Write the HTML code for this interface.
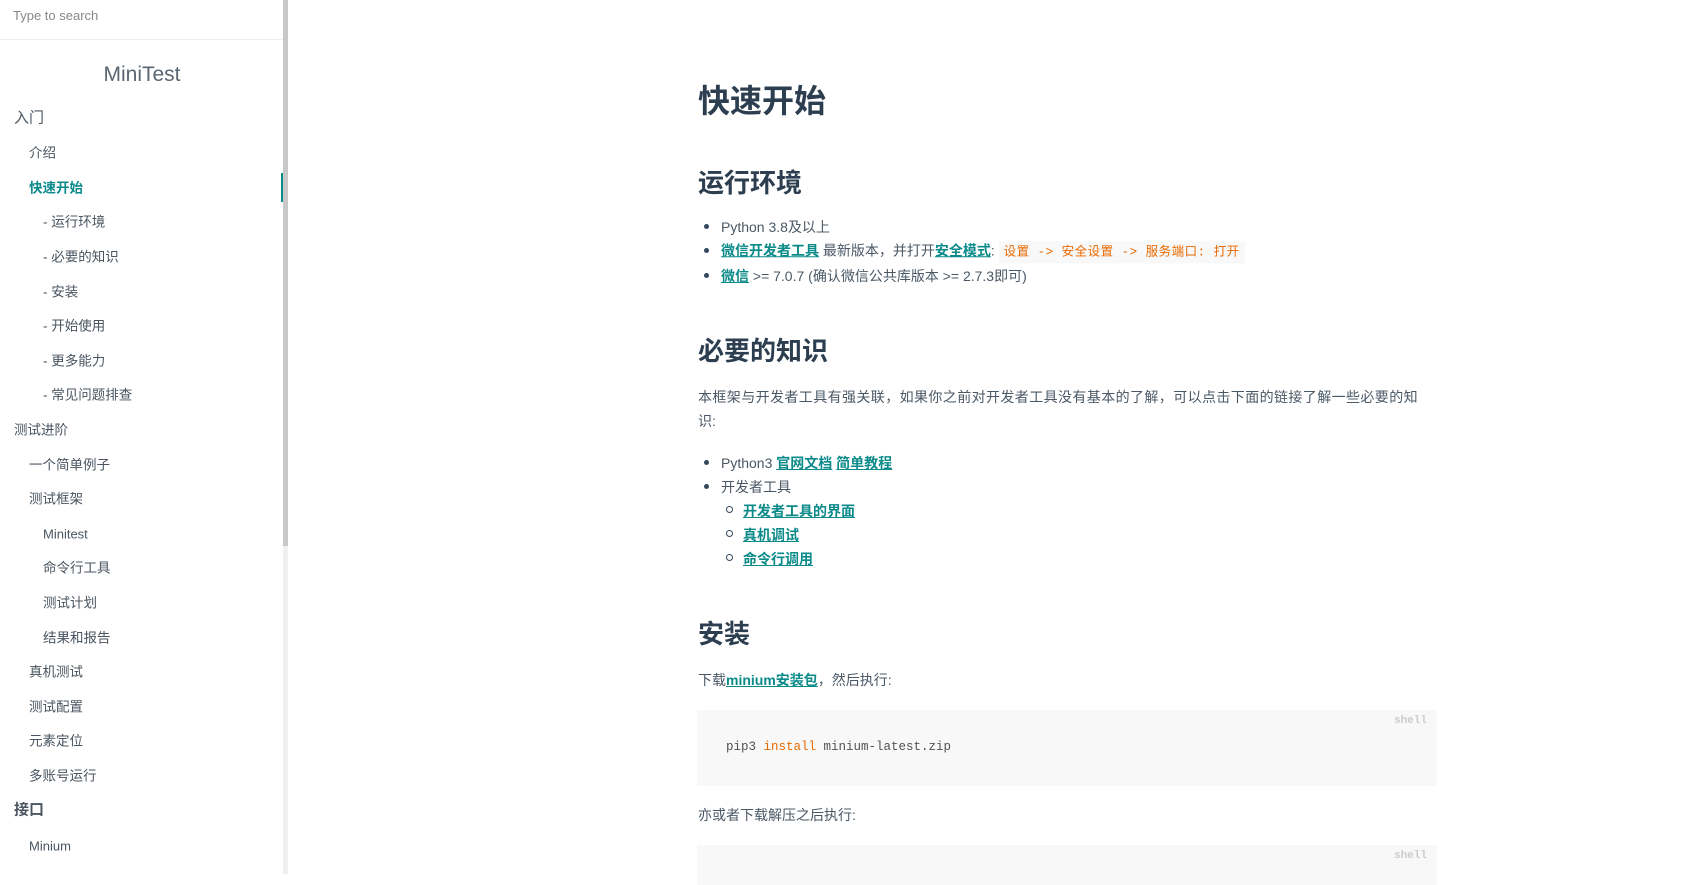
<!DOCTYPE html>
<html><head><meta charset="utf-8"><style>
*{margin:0;padding:0;box-sizing:border-box}
body{width:1696px;height:874px;overflow:hidden;background:#fff;font-family:"Liberation Sans","Noto Sans CJK SC",sans-serif;color:#34495e;position:relative}
.a{position:absolute;white-space:nowrap;line-height:1}
.sb{position:absolute;left:0;top:0;width:284px;height:874px;background:#fff}
.si{font-size:13.5px;color:#4a5560;transform:translateY(-50%)}
h1,h2{position:absolute;left:698px;font-weight:700;color:#2c3e50;line-height:1;transform:translateY(-50%);white-space:nowrap}
h1{font-size:32px}h2{font-size:26px}
.t{font-size:14px;color:#4a5866;transform:translateY(-50%)}
a{color:#0b8a8a;font-weight:700;text-decoration:underline}
.dot{position:absolute;width:5px;height:5px;border-radius:50%;background:#34495e}
.circ{position:absolute;width:7px;height:7px;border-radius:50%;border:1.3px solid #34495e}
.code{position:absolute;left:697px;width:740px;background:#f8f8f8}
.mono{font-family:"Liberation Mono",monospace}
</style></head><body>
<div class="sb">
<div class="a" style="left:13px;top:9px;font-size:13px;color:#888">Type to search</div>
<div style="position:absolute;left:0;top:39px;width:284px;height:1px;background:#eee"></div>
<div class="a" style="left:0;width:284px;text-align:center;top:64px;font-size:21px;color:#5a6672">MiniTest</div>
</div>
<div style="position:absolute;left:283px;top:0;width:5px;height:546px;background:#c8c8c8"></div>
<div style="position:absolute;left:283px;top:546px;width:5px;height:328px;background:#f0f0f0"></div>
<div style="position:absolute;left:281px;top:173px;width:2px;height:29px;background:#0b8a8a"></div>
<div class="a si" style="left:14px;top:118px;font-size:15px">入门</div>
<div class="a si" style="left:29px;top:153px">介绍</div>
<div class="a si" style="left:29px;top:188px;color:#0b8a8a;font-weight:700">快速开始</div>
<div class="a si" style="left:43px;top:222px">- 运行环境</div>
<div class="a si" style="left:43px;top:257px">- 必要的知识</div>
<div class="a si" style="left:43px;top:292px">- 安装</div>
<div class="a si" style="left:43px;top:326px">- 开始使用</div>
<div class="a si" style="left:43px;top:361px">- 更多能力</div>
<div class="a si" style="left:43px;top:395px">- 常见问题排查</div>
<div class="a si" style="left:14px;top:430px">测试进阶</div>
<div class="a si" style="left:29px;top:465px">一个简单例子</div>
<div class="a si" style="left:29px;top:499px">测试框架</div>
<div class="a si" style="left:43px;top:534px;font-size:13px">Minitest</div>
<div class="a si" style="left:43px;top:568px">命令行工具</div>
<div class="a si" style="left:43px;top:603px">测试计划</div>
<div class="a si" style="left:43px;top:638px">结果和报告</div>
<div class="a si" style="left:29px;top:672px">真机测试</div>
<div class="a si" style="left:29px;top:707px">测试配置</div>
<div class="a si" style="left:29px;top:741px">元素定位</div>
<div class="a si" style="left:29px;top:776px">多账号运行</div>
<div class="a si" style="left:14px;top:810px;font-size:15px;font-weight:700">接口</div>
<div class="a si" style="left:29px;top:846px;font-size:13px">Minium</div>

<h1 style="top:101px">快速开始</h1>
<h2 style="top:183px">运行环境</h2>
<div class="dot" style="left:704px;top:224px"></div>
<div class="a t" style="left:721px;top:227px">Python 3.8及以上</div>
<div class="dot" style="left:704px;top:248px"></div>
<div class="a t" style="left:721px;top:251px"><a>微信开发者工具</a> 最新版本，并打开<a>安全模式</a>: <span class="mono" style="background:#f8f8f8;color:#e96900;font-size:12.5px;padding:4px 5px;letter-spacing:0.5px">设置 -&gt; 安全设置 -&gt; 服务端口: 打开</span></div>
<div class="dot" style="left:704px;top:273px"></div>
<div class="a t" style="left:721px;top:276px"><a>微信</a> &gt;= 7.0.7 (确认微信公共库版本 &gt;= 2.7.3即可)</div>
<h2 style="top:351px">必要的知识</h2>
<div class="a t" style="left:698px;top:397px;letter-spacing:0.4px">本框架与开发者工具有强关联，如果你之前对开发者工具没有基本的了解，可以点击下面的链接了解一些必要的知</div>
<div class="a t" style="left:698px;top:421px">识:</div>
<div class="dot" style="left:704px;top:460px"></div>
<div class="a t" style="left:721px;top:463px">Python3 <a>官网文档</a> <a>简单教程</a></div>
<div class="dot" style="left:704px;top:484px"></div>
<div class="a t" style="left:721px;top:487px">开发者工具</div>
<div class="circ" style="left:726px;top:506px"></div>
<div class="a t" style="left:743px;top:511px"><a>开发者工具的界面</a></div>
<div class="circ" style="left:726px;top:530px"></div>
<div class="a t" style="left:743px;top:535px"><a>真机调试</a></div>
<div class="circ" style="left:726px;top:554px"></div>
<div class="a t" style="left:743px;top:559px"><a>命令行调用</a></div>
<h2 style="top:634px">安装</h2>
<div class="a t" style="left:698px;top:680px">下载<a>minium安装包</a>，然后执行:</div>
<div class="code" style="top:710px;height:76px">
<div class="a mono" style="right:10px;top:6px;font-size:11px;color:#ccc;font-weight:700">shell</div>
<div class="a mono" style="left:29px;top:31px;font-size:12.5px;color:#525252">pip3 <span style="color:#e96900">install</span> minium-latest.zip</div>
</div>
<div class="a t" style="left:698px;top:815px">亦或者下载解压之后执行:</div>
<div class="code" style="top:845px;height:40px">
<div class="a mono" style="right:10px;top:6px;font-size:11px;color:#ccc;font-weight:700">shell</div>
</div>
</body></html>
